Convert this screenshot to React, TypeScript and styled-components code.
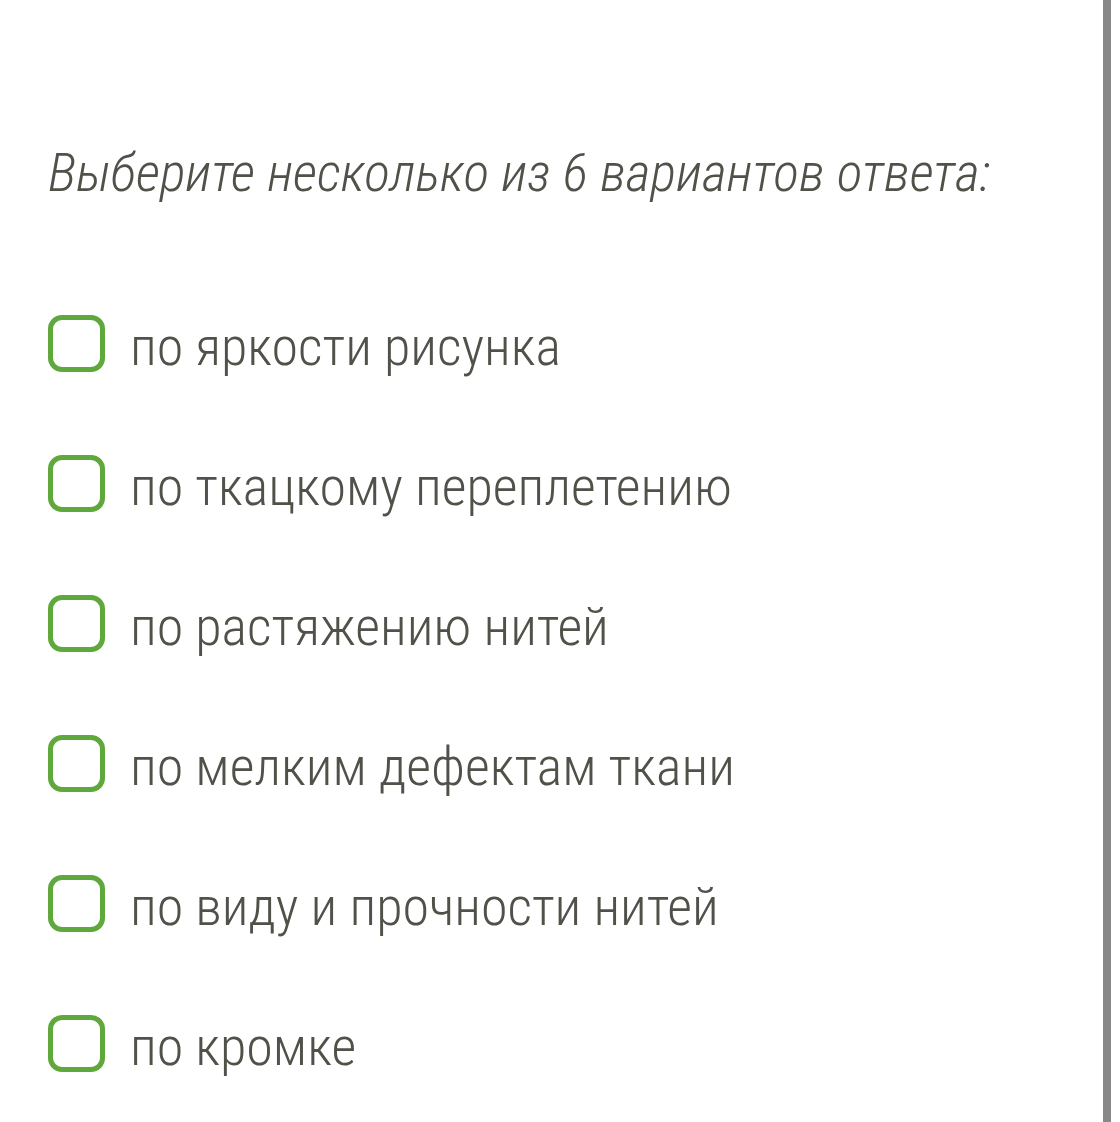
import React from "react";
import styled, { createGlobalStyle } from "styled-components";

const GlobalStyle = createGlobalStyle`
  html, body {
    margin: 0;
    padding: 0;
    background: #ffffff;
  }
  body {
    font-family: Roboto, "Noto Sans", sans-serif;
  }
`;

const Page = styled.div`
  width: 1120px;
  height: 1122px;
  display: flex;
  overflow: hidden;
`;

const Content = styled.div`
  flex: 1;
  padding: 140px 0 0 48px;
`;

const Scrollbar = styled.div`
  width: 8px;
  margin-right: 9px;
  background: #888888;
`;

const Title = styled.h1`
  margin: 0 0 108px;
  font-size: 54px;
  font-weight: 300;
  font-style: italic;
  font-stretch: 75%;
  color: #505148;
  line-height: 66px;
`;

const Options = styled.ul`
  list-style: none;
  margin: 0;
  padding: 0;
  display: flex;
  flex-direction: column;
  gap: 82px;
`;

const Option = styled.li`
  display: flex;
  align-items: center;
  gap: 25px;
  height: 58px;
`;

const Box = styled.span`
  width: 47px;
  height: 47px;
  border: 5px solid #5fa83b;
  border-radius: 14px;
  flex-shrink: 0;
`;

const Label = styled.span`
  padding-top: 8px;
  font-size: 54px;
  line-height: 58px;
  font-weight: 300;
  font-stretch: 75%;
  color: #505148;
`;

const answers = [
  "по яркости рисунка",
  "по ткацкому переплетению",
  "по растяжению нитей",
  "по мелким дефектам ткани",
  "по виду и прочности нитей",
  "по кромке",
];

const App = () => {
  return (
    <Page>
      <GlobalStyle />
      <Content>
        <Title>Выберите несколько из 6 вариантов ответа:</Title>
        <Options>
          {answers.map((a) => (
            <Option key={a}>
              <Box />
              <Label>{a}</Label>
            </Option>
          ))}
        </Options>
      </Content>
      <Scrollbar />
    </Page>
  );
};

export default App;
